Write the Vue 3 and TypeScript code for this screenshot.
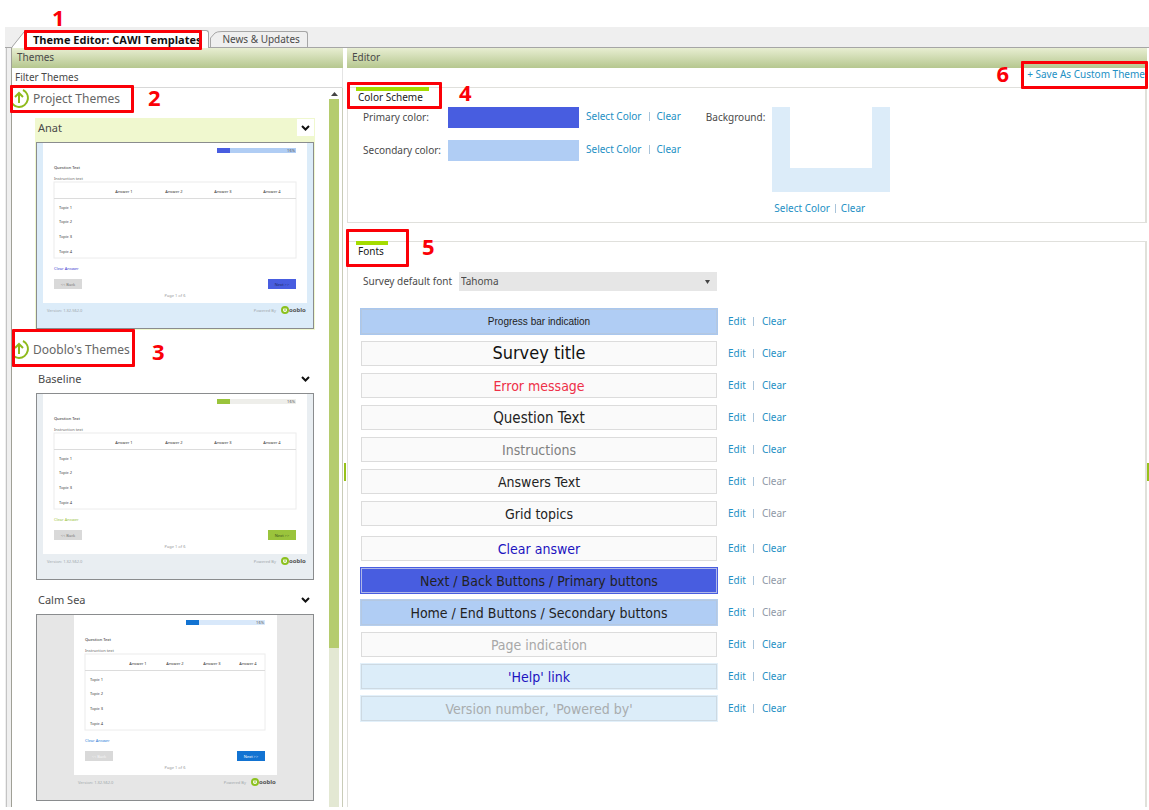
<script setup lang="ts">
import { ref } from 'vue'

interface Theme {
  name: string
  selected?: boolean
  backdrop: string
  accent: string
  track: string
  link: string
  nextText: string
  backText: string
  // horizontal extents inside the 276-unit wide preview
  page: [number, number]
  content: [number, number]
  columns: number[]
}
interface Section {
  title: string
  themes: Theme[]
}
interface FontRow {
  label: string
  kind: string
  locked?: boolean
}

const wide = {
  page: [6, 270] as [number, number],
  content: [17, 259] as [number, number],
  columns: [87, 137, 186, 235],
}

const sections: Section[] = [
  {
    title: 'Project Themes',
    themes: [
      { name: 'Anat', selected: true, backdrop: '#dcecf9', accent: '#485de0', track: '#b0cdf4', link: '#3c3cd0', nextText: '#20285c', backText: '#777', ...wide },
    ],
  },
  {
    title: "Dooblo's Themes",
    themes: [
      { name: 'Baseline', backdrop: '#e9eef2', accent: '#9ac43c', track: '#eeeeea', link: '#9ac43c', nextText: '#39501a', backText: '#777', ...wide },
      {
        name: 'Calm Sea', backdrop: '#e6e6e6', accent: '#1273d2', track: '#d8e8fa', link: '#2a80d8', nextText: '#fff', backText: '#f6f6f6',
        page: [37, 240], content: [48, 228], columns: [101, 138, 175, 211],
      },
    ],
  },
]

const topicLines = [66, 80, 95, 110]

const fontRows: FontRow[] = [
  { label: 'Progress bar indication', kind: 'progress' },
  { label: 'Survey title', kind: 'title' },
  { label: 'Error message', kind: 'error' },
  { label: 'Question Text', kind: 'question' },
  { label: 'Instructions', kind: 'muted' },
  { label: 'Answers Text', kind: 'plain', locked: true },
  { label: 'Grid topics', kind: 'plain', locked: true },
  { label: 'Clear answer', kind: 'reset' },
  { label: 'Next / Back Buttons / Primary buttons', kind: 'primary', locked: true },
  { label: 'Home / End Buttons / Secondary buttons', kind: 'secondary', locked: true },
  { label: 'Page indication', kind: 'faint' },
  { label: "'Help' link", kind: 'help' },
  { label: "Version number, 'Powered by'", kind: 'version' },
]

const marks = [1, 2, 3, 4, 5, 6]
const defaultFont = ref('Tahoma')
</script>

<template>
  <div class="app">
    <nav class="tabs">
      <div class="tab active">
        <svg class="slant" width="16" height="18" viewBox="0 0 16 18" aria-hidden="true">
          <path d="M0 18 L12 2 Q13 1 16 1 V18 Z" fill="#fff" />
          <path d="M0 17 L12 2 Q13 0.5 16 0.5" fill="none" stroke="#a6a6a6" />
        </svg>
        <button type="button">Theme Editor: CAWI Templates</button>
      </div>
      <div class="tab">
        <svg class="slant" width="12" height="16" viewBox="0 0 12 16" aria-hidden="true">
          <path d="M0.5 16 V7 L5 2 Q7 0.5 12 0.5" fill="none" stroke="#a6a6a6" />
        </svg>
        <button type="button">News &amp; Updates</button>
      </div>
    </nav>

    <div class="shell">
      <div class="gutter"></div>

      <aside class="sidebar">
        <h2 class="bar">Themes</h2>
        <div class="filter">Filter Themes</div>
        <div class="scroller">
          <div class="list">
            <section v-for="s in sections" :key="s.title" class="group">
              <h3>
                <svg width="17" height="20" viewBox="0 0 17 20" aria-hidden="true">
                  <path d="M11 1 A9 9 0 0 1 7 18 A9 9 0 0 1 0 14" fill="none" stroke="#8fba1c" stroke-width="2" />
                  <path d="M7 14 V4 M3 8 L7 4 L11 8" fill="none" stroke="#8fba1c" stroke-width="2" />
                </svg>
                {{ s.title }}
              </h3>
              <article v-for="t in s.themes" :key="t.name" class="theme" :class="{ selected: t.selected }">
                <header>
                  <span>{{ t.name }}</span>
                  <button type="button" :aria-label="'Options for ' + t.name">
                    <svg width="9" height="6" viewBox="0 0 9 6"><path d="M1 1 L4.5 4.5 L8 1" fill="none" stroke="#111" stroke-width="2" /></svg>
                  </button>
                </header>
                <svg class="preview" viewBox="0 0 276 185" role="img" :aria-label="t.name + ' preview'">
                  <rect width="276" height="185" :fill="t.backdrop" />
                  <rect :x="t.page[0]" y="0" :width="t.page[1] - t.page[0]" height="160" fill="#fff" />
                  <rect :x="t.content[1] - 79" y="5" width="79" height="5" :fill="t.track" />
                  <rect :x="t.content[1] - 79" y="5" width="13" height="5" :fill="t.accent" />
                  <text :x="t.content[1] - 1" y="9" text-anchor="end" fill="#555">16%</text>
                  <text :x="t.content[0]" y="26" fill="#222">Question Text</text>
                  <text :x="t.content[0]" y="37" fill="#666">Instruction text</text>
                  <rect :x="t.content[0]" y="39" :width="t.content[1] - t.content[0]" height="76" fill="none" stroke="#ececec" />
                  <rect :x="t.content[0]" y="55" :width="t.content[1] - t.content[0]" height="1" fill="#dcdcdc" />
                  <text v-for="(c, i) in t.columns" :key="c" :x="c" y="50" text-anchor="middle" fill="#333">Answer {{ i + 1 }}</text>
                  <text v-for="(y, i) in topicLines" :key="y" :x="t.content[0] + 5" :y="y" fill="#333">Topic {{ i + 1 }}</text>
                  <text :x="t.content[0]" y="127" :fill="t.link">Clear Answer</text>
                  <rect :x="t.content[0]" y="136" width="28" height="10" fill="#d9d9d9" />
                  <text :x="t.content[0] + 14" y="143" text-anchor="middle" :fill="t.backText">&lt;&lt; Back</text>
                  <rect :x="t.content[1] - 28" y="136" width="28" height="10" :fill="t.accent" />
                  <text :x="t.content[1] - 14" y="143" text-anchor="middle" :fill="t.nextText">Next &gt;&gt;</text>
                  <text x="138" y="154" text-anchor="middle" fill="#999">Page 1 of 6</text>
                  <text :x="t.page[0] + 4" y="169" fill="#a0a6aa">Version: 1.32.562.0</text>
                  <text :x="t.page[1] - 31" y="169" text-anchor="end" fill="#a0a6aa">Powered By</text>
                  <circle :cx="t.page[1] - 22" cy="167" r="3" fill="#fff" stroke="#8cc11f" stroke-width="2" />
                  <path :d="`M${t.page[1] - 22} 165 v3`" stroke="#8cc11f" />
                  <text class="brand" :x="t.page[1] - 18" y="169" fill="#555">ooblo</text>
                </svg>
              </article>
            </section>
          </div>
          <div class="scrollbar" aria-hidden="true">
            <svg width="7" height="4" viewBox="0 0 7 4"><path d="M0 4 L3.5 0 L7 4 Z" fill="#444" /></svg>
            <div class="track"><div class="thumb"></div></div>
          </div>
        </div>
      </aside>

      <div class="splitter"><i></i></div>

      <main class="editor">
        <h2 class="bar">Editor</h2>
        <div class="toolbar"><button type="button" class="link">+ Save As Custom Theme</button></div>

        <section class="panel colors">
          <h3><span>Color Scheme</span></h3>
          <div class="color-grid">
            <div class="pair">
              <div class="color-row">
                <span class="name">Primary color:</span>
                <span class="swatch primary"></span>
                <span class="actions"><button type="button" class="link">Select Color</button><i></i><button type="button" class="link">Clear</button></span>
              </div>
              <div class="color-row">
                <span class="name">Secondary color:</span>
                <span class="swatch secondary"></span>
                <span class="actions"><button type="button" class="link">Select Color</button><i></i><button type="button" class="link">Clear</button></span>
              </div>
            </div>
            <span class="name">Background:</span>
            <div class="backdrop">
              <div class="frame"></div>
              <span class="actions tight"><button type="button" class="link">Select Color</button><i></i><button type="button" class="link">Clear</button></span>
            </div>
          </div>
        </section>

        <section class="panel fonts">
          <h3><span>Fonts</span></h3>
          <div class="default-font">
            <label for="default-font">Survey default font</label>
            <div class="picker">
              <select id="default-font" v-model="defaultFont">
                <option>Tahoma</option>
                <option>Arial</option>
                <option>Verdana</option>
              </select>
              <svg width="5" height="4" viewBox="0 0 5 4" aria-hidden="true"><path d="M0 0 H5 L2.5 4 Z" fill="#444" /></svg>
            </div>
          </div>
          <ul>
            <li v-for="r in fontRows" :key="r.label" :class="r.kind">
              <div class="sample"><div>{{ r.label }}</div></div>
              <span class="actions">
                <button type="button" class="link">Edit</button><i></i><button type="button" class="link" :disabled="r.locked">Clear</button>
              </span>
            </li>
          </ul>
        </section>
      </main>

      <div class="splitter edge"><i></i></div>
    </div>

    <template v-for="n in marks" :key="n">
      <div class="box" :class="'box-' + n"></div>
      <b class="mark" :class="'mark-' + n">{{ n }}</b>
    </template>
  </div>
</template>

<style>
body {
  margin: 0;
  background: #fff;
}
</style>

<style scoped>
* {
  box-sizing: border-box;
}
.app {
  position: relative;
  display: flex;
  flex-direction: column;
  min-height: 100vh;
  padding: 27px 0 3px 5px;
  overflow: hidden;
  font: 11px/16px "Noto Sans", "Open Sans", sans-serif;
  color: #4a4a4a;
}
h2, h3, ul {
  margin: 0;
  padding: 0;
  font-weight: normal;
  list-style: none;
}
button {
  padding: 0;
  border: 0;
  background: none;
  font: inherit;
  color: inherit;
  cursor: pointer;
}

/* tab strip */
.tabs {
  display: flex;
  align-items: flex-end;
  height: 21px;
  padding-left: 7px;
  gap: 1px;
  background: #efefef;
  border-bottom: 1px solid #a6a6a6;
}
.tab {
  display: flex;
  height: 16px;
}
.tab button {
  border: solid #a6a6a6;
  border-width: 1px 1px 0 0;
  border-radius: 0 3px 0 0;
  font-size: 10px;
  line-height: 15px;
  padding-right: 7px;
}
.tab.active {
  height: 18px;
  margin-bottom: -1px;
}
.tab.active button {
  background: #fff;
  padding: 0 7px 0 5px;
  font: bold 11px/17px "Open Sans", "Noto Sans", sans-serif;
  color: #111;
}

/* frame */
.shell {
  flex: 1;
  display: flex;
}
.gutter {
  width: 7px;
  border-left: 1px solid #efefef;
  border-right: 1px solid #a0a096;
  background: linear-gradient(90deg, #c4c4c4 1px, #efefef 1px);
}
.bar {
  height: 20px;
  padding-left: 5px;
  font-size: 10px;
  line-height: 19px;
  background: linear-gradient(#e8eed2, #b6c78f);
}
.splitter {
  display: flex;
  align-items: center;
  justify-content: center;
  width: 4px;
}
.splitter i {
  width: 2px;
  height: 18px;
  margin-top: 88px;
  background: #97c11a;
}
.edge {
  width: 2px;
}

/* sidebar */
.sidebar {
  display: flex;
  flex-direction: column;
  width: 331px;
}
.filter {
  height: 20px;
  padding-left: 3px;
  font-size: 10px;
  line-height: 19px;
  border-bottom: 1px solid #d8d8d8;
  border-right: 1px solid #e4e4e4;
}
.scroller {
  flex: 1;
  display: flex;
  border-right: 1px solid #c9ccb8;
}
.list {
  flex: 1;
}
.group h3 {
  display: flex;
  align-items: center;
  gap: 4px;
  height: 22px;
  margin-bottom: 8px;
  font-size: 12px;
  color: #666;
}
.group + .group h3 {
  margin-top: 9px;
}
.theme {
  margin: 0 14px 0 23px;
  padding: 0 1px;
}
.theme + .theme {
  margin-top: 10px;
}
.theme header {
  display: flex;
  justify-content: space-between;
  align-items: flex-start;
  height: 24px;
  padding: 1px 0 0 2px;
  line-height: 18px;
}
.theme header button {
  display: grid;
  place-items: center;
  width: 17px;
  height: 17px;
  background: #fff;
}
.theme.selected {
  padding-bottom: 1px;
  background: #f0f8cf;
}
.preview {
  display: block;
  width: 100%;
  border: 1px solid #8a8c8e;
}
.preview text {
  font-size: 4px;
}
.preview .brand {
  font-size: 6px;
  font-weight: bold;
}
.scrollbar {
  display: flex;
  flex-direction: column;
  align-items: center;
  width: 10px;
  margin-right: 3px;
  padding-top: 4px;
  gap: 3px;
}
.track {
  flex: 1;
  width: 10px;
  background: #e3e8d3;
}
.thumb {
  height: 549px;
  background: #b5cc6e;
}

/* editor */
.editor {
  flex: 1;
  display: flex;
  flex-direction: column;
}
.toolbar {
  height: 19px;
  padding-right: 2px;
  text-align: right;
  line-height: 12px;
}
.link {
  color: #2390c4;
  font-size: 10px;
}
.link:disabled {
  color: #8e98a6;
}
.panel {
  border: 1px solid #e0e0dc;
  border-right: 2px solid #e0e1da;
}
.panel h3 {
  padding-left: 8px;
  margin-top: -1px;
  font-size: 10px;
  line-height: 13px;
  color: #1a1a1a;
}
.panel h3 span {
  display: inline-block;
  border-top: 4px solid #a4dc00;
  padding: 0 4px 0 2px;
}
.colors {
  height: 136px;
}
.colors h3 span {
  padding-right: 6px;
}
.fonts {
  flex: 1;
  margin-top: 18px;
  border-bottom: 0;
}
.color-grid {
  display: flex;
  padding: 3px 0 0 15px;
  font-size: 10px;
}
.pair {
  display: grid;
  align-content: start;
  gap: 12px;
  margin-right: 25px;
}
.color-row {
  display: flex;
}
.name {
  line-height: 21px;
}
.color-row .name {
  width: 85px;
}
.swatch {
  width: 131px;
  height: 21px;
  margin-right: 7px;
}
.swatch.primary {
  background: #485de0;
}
.swatch.secondary {
  background: #b0cdf4;
}
.actions {
  display: flex;
  align-items: center;
  height: 18px;
}
.actions i {
  width: 1px;
  height: 9px;
  margin: 0 7px;
  background: #a9c4da;
}
.actions.tight i {
  margin: 0 5px;
}
.backdrop {
  margin-left: 7px;
}
.frame {
  width: 118px;
  height: 85px;
  border: 18px solid #dcecf9;
  border-width: 0 18px 24px;
}
.backdrop .actions {
  margin: 7px 0 0 2px;
}
.default-font {
  display: flex;
  padding: 14px 0 0 15px;
  font-size: 10px;
}
.default-font label {
  width: 96px;
  line-height: 18px;
}
.picker {
  position: relative;
  width: 258px;
}
.picker select {
  display: block;
  width: 100%;
  height: 19px;
  padding: 0 2px;
  border: 0;
  border-radius: 0;
  appearance: none;
  background: #e6e6e6;
  color: #4a4a4a;
  font: 10px/19px "Noto Sans", "Open Sans", sans-serif;
}
.picker svg {
  position: absolute;
  top: 8px;
  right: 7px;
}
.fonts ul {
  display: grid;
  gap: 5px;
  padding: 17px 0 0 12px;
}
.fonts li {
  display: flex;
  align-items: flex-start;
  gap: 10px;
}
.fonts .actions {
  height: 26px;
}
.fonts .actions i {
  margin: 0 8px 0 7px;
}
.fonts li.reset {
  margin-top: 3px;
}
.sample {
  width: 358px;
  padding: 1px;
  text-align: center;
  font: 14px/24px "DejaVu Sans Condensed", "Noto Sans", sans-serif;
  color: #222;
}
.sample div {
  height: 25px;
  border: 1px solid #dcdcdc;
  background: #fafafa;
}
.progress .sample {
  background: #a9c7ee;
  font: 10px/23px "Liberation Sans", sans-serif;
}
.progress .sample div,
.secondary .sample div {
  background: #b0cdf4;
  border-color: #b4c8e2;
}
.secondary .sample {
  background: #b6cfee;
}
.title .sample {
  font-size: 18px;
  line-height: 22px;
  color: #111;
}
.question .sample {
  font-size: 15px;
}
.error .sample {
  color: #ee3048;
}
.muted .sample {
  color: #808080;
}
.reset .sample {
  color: #1c14c0;
}
.faint .sample {
  color: #a8a8a8;
}
.primary .sample {
  background: #485de0;
}
.primary .sample div {
  background: #485de0;
  border-color: #b0b8e8;
}
.help .sample,
.version .sample {
  background: #e2f0fa;
}
.help .sample div,
.version .sample div {
  background: #dcedf9;
  border-color: #cdd9e2;
}
.help .sample {
  color: #1c14c0;
}
.version .sample {
  color: #a8acae;
}

/* numbered callouts laid over the window */
.box {
  position: absolute;
  border: 3px solid #fb0007;
  border-radius: 1px;
  pointer-events: none;
}
.mark {
  position: absolute;
  font: bold 22px/24px "Open Sans", "Noto Sans", sans-serif;
  color: #fb0007;
}
.box-1 { left: 24px; top: 30px; width: 178px; height: 20px; }
.box-2 { left: 10px; top: 85px; width: 124px; height: 28px; }
.box-3 { left: 12px; top: 329px; width: 123px; height: 38px; }
.box-4 { left: 347px; top: 82px; width: 95px; height: 27px; }
.box-5 { left: 346px; top: 229px; width: 63px; height: 38px; }
.box-6 { right: 1px; top: 61px; width: 127px; height: 28px; }
.mark-1 { left: 52px; top: 5px; }
.mark-2 { left: 148px; top: 85px; }
.mark-3 { left: 152px; top: 339px; }
.mark-4 { left: 459px; top: 80px; }
.mark-5 { left: 422px; top: 234px; }
.mark-6 { right: 140px; top: 61px; }
</style>
